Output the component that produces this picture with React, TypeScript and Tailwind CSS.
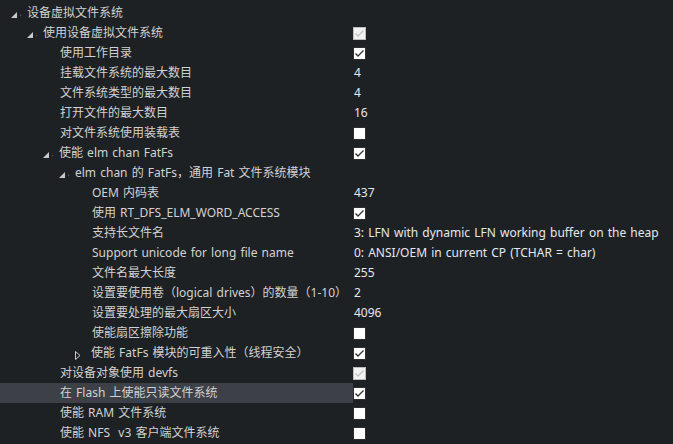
import { clsx as cl } from "clsx"

type Value =
    | { kind: "none" }
    | { kind: "check"; checked: boolean; disabled?: boolean }
    | { kind: "text"; text: string }

interface Row {
    label: string
    level: number
    arrow?: "open" | "closed"
    value: Value
    selected?: boolean
}

const none: Value = { kind: "none" }
const on: Value = { kind: "check", checked: true }
const off: Value = { kind: "check", checked: false }
const grayOn: Value = { kind: "check", checked: true, disabled: true }
const txt = (text: string): Value => ({ kind: "text", text })

const rows: Row[] = [
    { label: "设备虚拟文件系统", level: 0, arrow: "open", value: none },
    { label: "使用设备虚拟文件系统", level: 1, arrow: "open", value: grayOn },
    { label: "使用工作目录", level: 2, value: on },
    { label: "挂载文件系统的最大数目", level: 2, value: txt("4") },
    { label: "文件系统类型的最大数目", level: 2, value: txt("4") },
    { label: "打开文件的最大数目", level: 2, value: txt("16") },
    { label: "对文件系统使用装载表", level: 2, value: off },
    { label: "使能 elm chan FatFs", level: 2, arrow: "open", value: on },
    { label: "elm chan 的 FatFs，通用 Fat 文件系统模块", level: 3, arrow: "open", value: none },
    { label: "OEM 内码表", level: 4, value: txt("437") },
    { label: "使用 RT_DFS_ELM_WORD_ACCESS", level: 4, value: on },
    { label: "支持长文件名", level: 4, value: txt("3: LFN with dynamic LFN working buffer on the heap") },
    { label: "Support unicode for long file name", level: 4, value: txt("0: ANSI/OEM in current CP (TCHAR = char)") },
    { label: "文件名最大长度", level: 4, value: txt("255") },
    { label: "设置要使用卷（logical drives）的数量（1-10）", level: 4, value: txt("2") },
    { label: "设置要处理的最大扇区大小", level: 4, value: txt("4096") },
    { label: "使能扇区擦除功能", level: 4, value: off },
    { label: "使能 FatFs 模块的可重入性（线程安全）", level: 4, arrow: "closed", value: on },
    { label: "对设备对象使用 devfs", level: 2, value: grayOn },
    { label: "在 Flash 上使能只读文件系统", level: 2, value: on, selected: true },
    { label: "使能 RAM 文件系统", level: 2, value: off },
    { label: "使能 NFS  v3 客户端文件系统", level: 2, value: off },
]

// indent per level, matches the 16px steps of the tree
const indent = ["pl-[12px]", "pl-[28px]", "pl-[44px]", "pl-[60px]", "pl-[76px]"]

const Arrow = ({ type }: { type?: "open" | "closed" }) => {
    if (type === "open") {
        return (
            <svg width="16" height="20" viewBox="0 0 16 20" className="-ml-px shrink-0">
                <polygon points="6,9 6,15 0,15" fill="#c9c9c9" />
                <polygon points="9,11.5 10.5,12.5 9,13.5" fill="#5a5a5a" />
            </svg>
        )
    }
    if (type === "closed") {
        return (
            <svg width="16" height="20" viewBox="0 0 16 20" className="-ml-px shrink-0">
                <polygon points="0.5,8.5 0.5,16.5 5,12.5" fill="none" stroke="#c9c9c9" strokeWidth="1" />
            </svg>
        )
    }
    return <span className="w-4 shrink-0" />
}

const CheckBox = ({ checked, disabled }: { checked: boolean; disabled?: boolean }) => (
    <span
        className={cl(
            "flex w-[13px] h-[13px] items-center justify-center border",
            disabled ? "bg-[#f2f2f2] border-[#bdbdbd]" : "bg-white border-[#2e2e2e]",
        )}
    >
        {checked && (
            <svg width="11" height="11" viewBox="0 0 11 11">
                <polyline
                    points="1.5,5.5 4,8 9.5,2.5"
                    fill="none"
                    stroke={disabled ? "#c4c4c4" : "#333333"}
                    strokeWidth="1.4"
                />
            </svg>
        )}
    </span>
)

const App = () => {
    return (
        <div
            className="w-[673px] h-[444px] overflow-hidden bg-[#1e2124] pt-[3px] text-[12px] [word-spacing:1px]"
            style={{ fontFamily: '"Noto Sans", "Noto Sans CJK SC", sans-serif' }}
        >
            {rows.map((row, i) => (
                <div key={i} className="flex h-5 items-center">
                    <div
                        className={cl(
                            "flex h-full w-[353px] shrink-0 items-center whitespace-pre text-[#d2d2d2]",
                            indent[row.level],
                            row.selected && "bg-[#3d4147]",
                        )}
                    >
                        <Arrow type={row.arrow} />
                        <span className="leading-5">{row.label}</span>
                    </div>
                    <div className="flex h-full items-center whitespace-nowrap text-[#e4e8ee]">
                        {row.value.kind === "check" && (
                            <CheckBox checked={row.value.checked} disabled={row.value.disabled} />
                        )}
                        {row.value.kind === "text" && <span className="pl-px leading-5">{row.value.text}</span>}
                    </div>
                </div>
            ))}
        </div>
    )
}

export default App
